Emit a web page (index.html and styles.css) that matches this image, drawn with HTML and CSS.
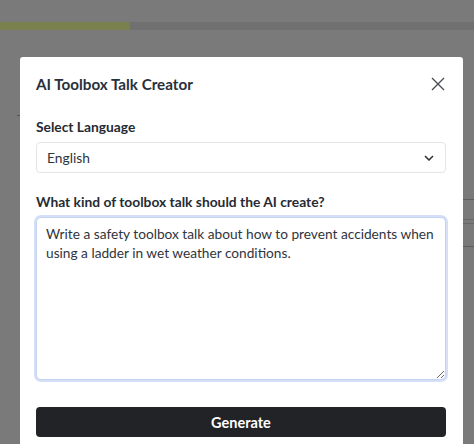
FILE: index.html
```html
<!DOCTYPE html>
<html lang="en">
<head>
  <meta charset="UTF-8">
  <meta name="viewport" content="width=device-width, initial-scale=1.0">
  <title>AI Toolbox Talk Creator</title>
  <link rel="stylesheet" href="styles.css">
</head>
<body>
  <div class="backdrop">
    <div class="page-bar">
      <div class="page-bar-fill"></div>
    </div>
    <div class="page-mark-left"></div>
    <div class="page-lines">
      <span class="line l1"></span>
      <span class="line l2"></span>
      <span class="line l3"></span>
      <span class="line l4"></span>
    </div>

    <div class="modal">
      <div class="modal-header">
        <h3>AI Toolbox Talk Creator</h3>
        <button class="close" aria-label="Close">
          <svg width="14" height="14" viewBox="0 0 14 14">
            <path d="M1 1 L13 13 M13 1 L1 13" stroke="#4a4f57" stroke-width="1.4" fill="none"/>
          </svg>
        </button>
      </div>
      <div class="modal-body">
        <div class="input-group">
          <label for="language">Select Language</label>
          <div class="select-wrap">
            <select id="language">
              <option selected>English</option>
              <option>Spanish</option>
              <option>French</option>
            </select>
            <svg class="chevron" width="10" height="6" viewBox="0 0 10 6">
              <path d="M1 1 L5 5 L9 1" stroke="#2b2f36" stroke-width="1.5" fill="none"/>
            </svg>
          </div>
        </div>
        <div class="input-group">
          <label for="prompt">What kind of toolbox talk should the AI create?</label>
          <textarea id="prompt">Write a safety toolbox talk about how to prevent accidents when using a ladder in wet weather conditions.</textarea>
        </div>
        <button class="generate">Generate</button>
      </div>
    </div>
  </div>
</body>
</html>
```

FILE: styles.css
```css
body {
  margin: 0;
  font-family: Lato, "Noto Sans", sans-serif;
  background-color: #7a7a7a;
  overflow: hidden;
}

.backdrop {
  position: relative;
  width: 474px;
  height: 444px;
  padding-top: 22px;
  box-sizing: border-box;
  background-color: #7a7a7a;
}

.page-bar {
  height: 8px;
  background-color: #707071;
}

.page-bar-fill {
  width: 130px;
  height: 100%;
  background-color: #7b804f;
}

.page-mark-left {
  position: absolute;
  left: 17px;
  top: 115px;
  width: 3px;
  height: 1px;
  background-color: #555;
}

.page-lines .line {
  position: absolute;
  left: 463px;
  width: 11px;
  height: 1px;
  background-color: #5e5e5e;
}

.page-lines .l1 { top: 199px; }
.page-lines .l2 { top: 219px; background-color: #686868; }
.page-lines .l3 { top: 223px; background-color: #686868; }
.page-lines .l4 { top: 246px; }

.modal {
  margin: 27px 0 0 20px;
  width: 443px;
  height: 400px;
  background-color: #fff;
  border-radius: 3px 3px 0 0;
}

.modal-header {
  display: flex;
  align-items: center;
  justify-content: space-between;
  padding: 16px 18px 0 16px;
  height: 22px;
}

.modal-header h3 {
  margin: 0;
  font-size: 15.2px;
  font-weight: 700;
  color: #28303b;
}

.close {
  border: none;
  background: none;
  padding: 0;
  display: flex;
  cursor: pointer;
}

.modal-body {
  padding: 23px 17px 0 16px;
}

.input-group {
  margin-bottom: 20px;
}

.input-group label {
  display: block;
  font-size: 13.8px;
  font-weight: 700;
  color: #262b33;
  margin-bottom: 7px;
}

.select-wrap {
  position: relative;
}

select {
  width: 100%;
  height: 31px;
  padding: 0 10px;
  border: 1px solid #e4e5e8;
  border-radius: 4px;
  background-color: #fff;
  font-family: inherit;
  font-size: 13.8px;
  color: #30353c;
  appearance: none;
  box-sizing: border-box;
}

.chevron {
  position: absolute;
  right: 12px;
  top: 13px;
}

textarea {
  display: block;
  width: 100%;
  height: 163px;
  margin-top: 2px;
  padding: 6px 9px;
  border: 1px solid #c5d2f2;
  border-radius: 5px;
  box-shadow: 0 0 0 2px #d5e0f8;
  font-family: inherit;
  font-size: 13.7px;
  line-height: 19px;
  color: #30353c;
  box-sizing: border-box;
  resize: vertical;
  outline: none;
}

.generate {
  width: 100%;
  height: 30px;
  margin-top: 7px;
  background-color: #212327;
  color: #fff;
  border: none;
  border-radius: 4px;
  font-family: inherit;
  font-size: 14.5px;
  font-weight: 700;
  cursor: pointer;
}
```
